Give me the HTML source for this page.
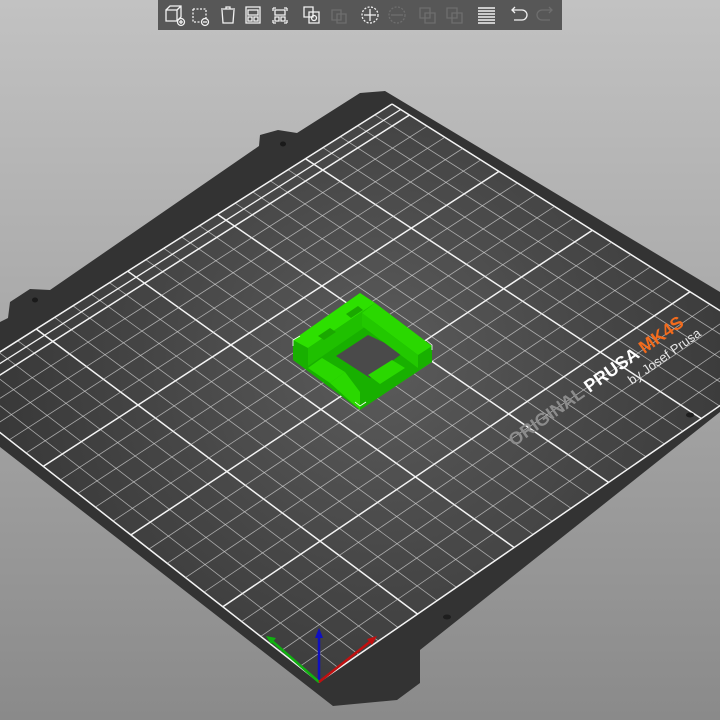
<!DOCTYPE html>
<html><head><meta charset="utf-8">
<style>
html,body{margin:0;padding:0;width:720px;height:720px;overflow:hidden;}
body{background:linear-gradient(#c2c2c2 0%,#a9a9a9 45%,#8a8a8a 100%);font-family:"Liberation Sans",sans-serif;}
svg{position:absolute;left:0;top:0;}
</style></head><body>
<svg id="s" width="720" height="720" viewBox="0 0 720 720">
<defs>
<radialGradient id="pg" cx="380" cy="360" r="420" gradientUnits="userSpaceOnUse">
<stop offset="0" stop-color="#5b5b5b"/><stop offset="0.55" stop-color="#454545"/><stop offset="1" stop-color="#363636"/>
</radialGradient>
</defs>
<polygon fill="#333333" points="360,93 385,91 720,292 720,412 420,650 420,683 397,700 333,706 0,447 0,322 8,318 10,302 30,289 50,290 259,146 260,135 278,130 297,133"/>
<polygon id="gridbg" fill="url(#pg)" points=""/>
<g id="grid"></g>
<ellipse cx="690" cy="415" rx="4" ry="2.5" fill="#1e1e1e"/>
<ellipse cx="447" cy="617" rx="4" ry="2.5" fill="#1e1e1e"/>
<ellipse cx="283" cy="144" rx="3" ry="2.5" fill="#1a1a1a"/>
<ellipse cx="35" cy="300" rx="3" ry="2.5" fill="#1a1a1a"/>
<g transform="translate(514,447) rotate(-35.5)">
<text x="0" y="0" font-size="18" font-weight="bold" fill="#8c8c8c" font-family="Liberation Sans, sans-serif">ORIGINAL <tspan fill="#ffffff">PRUSA</tspan> <tspan fill="#f26b1d">MK4S</tspan></text>
<text x="132" y="18" font-size="13" fill="#e8e8e8" font-family="Liberation Sans, sans-serif">by Josef Prusa</text>
</g>
<polygon fill="#18b000" points="293,340 360,293 375,303 432,346 432,362 360,410 293,360"/>
<polygon fill="#4a4a4a" points="336,356 368,335 404,352 370,378"/>
<polygon fill="#2de000" points="293,340 360,293 375,303 308,348"/>
<polygon fill="#1fc000" points="308,348 375,303 375,320 308,366"/>
<polygon fill="#2ad800" points="375,303 432,346 418,355 362,313"/>
<polygon fill="#22c800" points="362,313 418,355 418,368 362,326"/>
<polygon fill="#2ad800" points="308,368 322,358 345,372 330,383"/>
<polygon fill="#2ad800" points="368,375 392,360 405,368 380,384"/>
<polygon fill="#1aa800" points="318,336 330,328 336,332 324,340"/>
<polygon fill="#1aa800" points="346,314 358,306 363,310 351,318"/>
<polygon fill="#2ad800" points="330,383 345,372 360,392 360,410"/>
<polyline points="293,346 293,340 300,336" fill="none" stroke="#fff" stroke-width="0.8"/>
<polyline points="355,402 360,406 366,402" fill="none" stroke="#fff" stroke-width="0.8"/>
<polyline points="426,340 432,345 432,350" fill="none" stroke="#fff" stroke-width="0.8"/>
<line x1="319" y1="682" x2="319" y2="636" stroke="#1010c0" stroke-width="2.5"/>
<polygon points="315,638 319,628 323,638" fill="#1010c0"/>
<line x1="319" y1="682" x2="272" y2="641" stroke="#10b010" stroke-width="2.5"/>
<polygon points="266,636 276,638 271,644" fill="#10b010"/>
<line x1="319" y1="682" x2="371" y2="641" stroke="#c01010" stroke-width="2.5"/>
<polygon points="377,636 367,639 372,645" fill="#c01010"/>
<rect x="158" y="0" width="404" height="30" fill="#575757"/>
<g fill="none" stroke="#f2f2f2" stroke-width="1.3">
<path d="M166,10 h11 v11 h-11 z M166,10 l4,-4 h11 v11 l-4,4 M177,10 l4,-4"/><circle cx="181" cy="22" r="3.5" fill="#575757"/><path d="M179,22h4M181,20v4"/>
<path d="M193,9 h13 v9 M193,9 v13 h8" stroke-dasharray="2 1.5"/><circle cx="205" cy="22" r="3.5"/><path d="M203,22h4"/>
<path d="M221,9 h14 M226,9 v-2 h4 v2 M222,10 l1,13 h10 l1,-13"/>
<path d="M246,7 h14 v16 h-14 z M248,10 h10 v5 h-10 z M248,17 h4 v4 h-4z M254,17 h4 v4 h-4z"/>
<path d="M273,8 h3 M273,8 v3 M287,8 h-3 M287,8 v3 M273,23 h3 M273,23 v-3 M287,23 h-3 M287,23 v-3 M275,10 h10 v5 h-10 z M275,17 h4 v4 h-4z M281,17 h4 v4 h-4z"/>
<path d="M304,7 h9 v10 h-9 z M309,12 h10 v11 h-10 z"/><circle cx="314" cy="18" r="2.5"/>
<circle cx="370" cy="15" r="8" stroke-dasharray="2 1.5"/><path d="M364,15h12M370,9v12"/>
<path d="M478,8 h17 M478,11 h17 M478,14 h17 M478,17 h17 M478,20 h17 M478,23 h17" stroke-width="1.5"/>
<path d="M512,10 h10 a5,5 0 0 1 0,10 h-8 M515,7 l-3,3 3,3"/>
</g>
<g fill="none" stroke="#6e6e6e" stroke-width="1.3">
<path d="M332,10 h9 v10 h-9 z M337,14 h9 v9 h-9 z"/>
<circle cx="397" cy="15" r="8" stroke-dasharray="2 1.5"/><path d="M391,15h12"/>
<path d="M420,8 h10 v10 h-10z M425,13 h10 v10 h-10z"/>
<path d="M447,8 h10 v10 h-10z M452,13 h10 v10 h-10z"/>
<path d="M552,10 h-10 a5,5 0 0 0 0,10 h8 M549,7 l3,3 -3,3"/>
</g>
</svg>
<script>
(function(){
var B=[319,682],R=[792,356],T=[392,104],L=[-57,388];
var x0=B[0],y0=B[1],x1=R[0],y1=R[1],x2=T[0],y2=T[1],x3=L[0],y3=L[1];
var dx1=x1-x2,dx2=x3-x2,dx3=x0-x1+x2-x3,dy1=y1-y2,dy2=y3-y2,dy3=y0-y1+y2-y3;
var den=dx1*dy2-dx2*dy1;
var g=(dx3*dy2-dx2*dy3)/den,h=(dx1*dy3-dx3*dy1)/den;
var a=x1-x0+g*x1,b=x3-x0+h*x3,c=x0,d=y1-y0+g*y1,e=y3-y0+h*y3,f=y0;
function P(u,v){var s=u/250,t=v/210;var w=g*s+h*t+1;return [(a*s+b*t+c)/w,(d*s+e*t+f)/w];}
var ns="http://www.w3.org/2000/svg",G=document.getElementById('grid');
document.getElementById('gridbg').setAttribute('points',[B,R,T,L].map(function(p){return p.join(',')}).join(' '));
function ln(p,q,col,wd){var l=document.createElementNS(ns,'line');l.setAttribute('x1',p[0].toFixed(1));l.setAttribute('y1',p[1].toFixed(1));l.setAttribute('x2',q[0].toFixed(1));l.setAttribute('y2',q[1].toFixed(1));l.setAttribute('stroke',col);l.setAttribute('stroke-width',wd);G.appendChild(l);}
for(var u=0;u<=250;u+=10){var mj=(u%50==0);ln(P(u,0),P(u,210),mj?'#f4f4f4':'rgba(215,215,215,0.7)',mj?1.5:0.8);}
for(var v=0;v<=210;v+=10){var mj2=(v%50==0)||v==210;ln(P(0,v),P(250,v),mj2?'#f4f4f4':'rgba(215,215,215,0.7)',mj2?1.5:0.8);}
ln(P(0,205),P(250,205),'#f4f4f4',1.3);
})();
</script>
</body></html>
